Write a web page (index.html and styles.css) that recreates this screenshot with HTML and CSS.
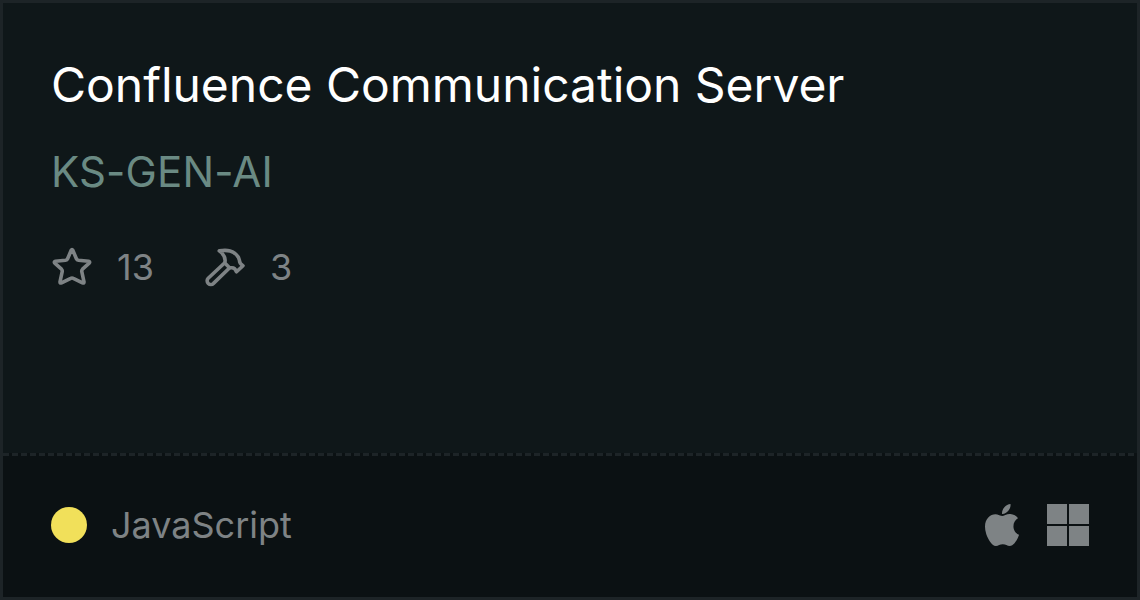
FILE: index.html
```
<!DOCTYPE html>
<html lang="en">
<head>
    <meta charset="UTF-8">
    <meta name="viewport" content="width=device-width, initial-scale=1.0">
    <title>Confluence Communication Server</title>
    <link rel="stylesheet" href="styles.css">
</head>
<body>
    <div class="card">
        <div class="card-body">
            <h1 class="title">Confluence Communication Server</h1>
            <div class="owner">KS-GEN-AI</div>
            <div class="stats">
                <div class="stat">
                    <svg class="stat-icon" viewBox="0 0 42 42">
                        <path d="M20.2 4.3 Q21 3 21.8 4.3 L25.4 12.7 Q26 14.1 27.5 14.3 L37.6 15.3 Q39.4 15.8 38.2 17.2 L31.5 23.2 Q30.5 24.2 30.8 25.6 L33 35.8 Q33.1 37.5 31.5 36.9 L22.3 32.3 Q21 31.6 19.7 32.3 L10.5 36.9 Q8.9 37.5 9 35.8 L11.2 25.6 Q11.5 24.2 10.5 23.2 L3.8 17.2 Q2.6 15.8 4.4 15.3 L14.5 14.3 Q16 14.1 16.6 12.7 Z"/>
                    </svg>
                    <span>13</span>
                </div>
                <div class="stat">
                    <svg class="stat-icon" viewBox="0 0 42 42">
                        <path d="M20.5 17 L4.2 32.2 a3.7 3.7 0 0 0 5.3 5.2 L25.7 21.8"/>
                        <path d="M15.3 4.8 C23 3.8 30 4 34.5 11.5 L35.5 14.5 Q35.3 17.5 39 19.7 L32.5 25.8 Q31 21.5 27.5 21.8 H25.5 L20.8 17 Q22.5 10 15.3 4.8 Z"/>
                    </svg>
                    <span>3</span>
                </div>
            </div>
        </div>
        <div class="card-footer">
            <div class="language">
                <span class="dot"></span>
                <span>JavaScript</span>
            </div>
            <div class="platforms">
                <svg class="apple" viewBox="4 32 376 448" preserveAspectRatio="none">
                    <path d="M318.7 268.7c-.2-36.7 16.4-64.4 50-84.8-18.8-26.9-47.2-41.7-84.7-44.6-35.5-2.8-74.3 20.7-88.5 20.7-15 0-49.4-19.7-76.4-19.7C63.3 141.2 4 184.8 4 273.5q0 39.3 14.4 81.2c12.8 36.7 59 126.7 107.2 125.2 25.2-.6 43-17.9 75.8-17.9 31.8 0 48.3 17.9 76.4 17.9 48.6-.7 90.4-82.5 102.6-119.3-65.2-30.7-61.7-90-61.7-91.9zm-56.6-164.2c27.3-32.4 24.8-61.9 24-72.5-24.1 1.4-52 16.4-67.9 34.9-17.5 19.8-27.8 44.3-25.6 71.9 26.1 2 49.9-11.4 69.5-34.3z"/>
                </svg>
                <svg class="windows" viewBox="0 0 42 42">
                    <path d="M0 0h20v20H0zM22 0h20v20H22zM0 22h20v20H0zM22 22h20v20H22z"/>
                </svg>
            </div>
        </div>
    </div>
</body>
</html>
```

FILE: styles.css
```
* {
    box-sizing: border-box;
}
body {
    margin: 0;
    font-family: Inter, "Liberation Sans", sans-serif;
}
.card {
    display: flex;
    flex-direction: column;
    width: 100%;
    height: 100vh;
    border: 3px solid #1d2427;
    background-color: #0f1719;
    color: #7e8385;
}
.card-body {
    flex: 1;
    padding: 48px;
}
.title {
    margin: 0;
    font-size: 48px;
    font-weight: 400;
    line-height: 68px;
    letter-spacing: -0.02px;
    color: #fff;
}
.owner {
    margin-top: 23px;
    font-size: 42px;
    line-height: 60px;
    letter-spacing: 0.15px;
    color: #6a8a83;
}
.stats {
    display: flex;
    gap: 50px;
    margin-top: 35px;
    font-size: 36px;
    line-height: 60px;
}
.stat {
    display: flex;
    align-items: center;
    gap: 24px;
}
.stat-icon {
    width: 42px;
    height: 42px;
    fill: none;
    stroke: #7e8385;
    stroke-width: 3.6;
    stroke-linejoin: round;
    stroke-linecap: round;
}
.card-footer {
    display: flex;
    justify-content: space-between;
    align-items: center;
    height: 144px;
    background: repeating-linear-gradient(to right, #1d2427 0 6px, transparent 6px 9px) top / 100% 3px no-repeat #0b1113;
    padding: 0 48px;
}
.language {
    display: flex;
    align-items: center;
    gap: 24px;
    font-size: 36px;
}
.dot {
    width: 36px;
    height: 36px;
    border-radius: 50%;
    background-color: #f1e05a;
}
.platforms {
    display: flex;
    align-items: center;
    gap: 28px;
    fill: #7e8385;
}
.apple {
    width: 34px;
    height: 42px;
}
.windows {
    width: 42px;
    height: 42px;
}
```
